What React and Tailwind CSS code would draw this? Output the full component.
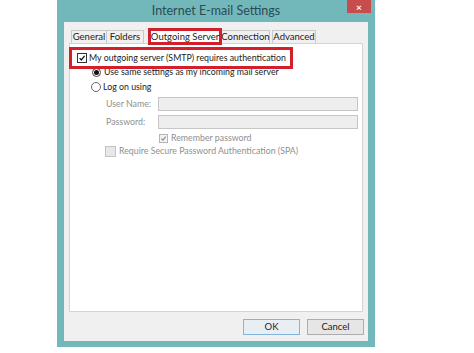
import React from "react";

const font = { fontFamily: 'Lato, "Noto Sans", sans-serif' };

function Check({ color = "#111" }) {
  return (
    <svg viewBox="0 0 10 10" className="w-full h-full">
      <path d="M2 5.2 L4.2 7.4 L8.2 2.4" fill="none" stroke={color} strokeWidth="1.6" />
    </svg>
  );
}

export default function App() {
  return (
    <div className="w-[474px] h-[353px] bg-white overflow-hidden whitespace-nowrap" style={font}>
      <div className="ml-[57px] w-[318px] h-[347px] bg-[#72b8bb] flex flex-col">
        {/* title bar */}
        <div className="relative h-[22px] flex items-center justify-center">
          <span className="text-[12.5px] text-[#2c4b52] leading-none">Internet E-mail Settings</span>
          <div className="absolute right-[4px] top-0 w-[24px] h-[13px] bg-[#c94c4c] flex items-center justify-center">
            <span className="text-white text-[10px] leading-none font-bold">×</span>
          </div>
        </div>
        {/* body */}
        <div className="mx-[7px] h-[319px] bg-[#f0f0f0] flex flex-col pl-[5px] pr-[5px]">
          {/* tabs */}
          <div className="flex items-end h-[21px] pl-[2px] text-[9.5px] text-[#222]">
            <div className="h-[13px] w-[36px] border border-b-0 border-[#c9c9c9] bg-[#f0f0f0] flex items-center justify-center leading-none">General</div>
            <div className="h-[13px] w-[37px] border border-b-0 border-l-0 border-[#c9c9c9] bg-[#f0f0f0] flex items-center justify-center leading-none">Folders</div>
            <div className="relative z-10 mb-[-2px] ml-[4px] h-[17px] w-[74px] border-[3px] border-[#d21f2b] bg-white flex items-start justify-center leading-none pt-[1px]">Outgoing Server</div>
            <div className="h-[13px] w-[48px] border border-b-0 border-l-0 border-[#c9c9c9] bg-[#f0f0f0] flex items-center justify-center leading-none">Connection</div>
            <div className="ml-[2px] h-[13px] w-[44px] border border-b-0 border-[#c9c9c9] bg-[#f0f0f0] flex items-center justify-center leading-none">Advanced</div>
          </div>
          {/* panel */}
          <div className="w-[294px] h-[269px] bg-white border border-[#d4d4d4] text-[8.8px] text-[#222] flex flex-col">
            <div className="relative z-10 mt-[3px] ml-[-1px] w-[224px] h-[22px] border-[3px] border-[#d21f2b] flex items-center pl-[5px] gap-[2px]">
              <div className="shrink-0 w-[10px] h-[10px] border border-[#333] bg-white">
                <Check />
              </div>
              <span className="leading-none">My outgoing server (SMTP) requires authentication</span>
            </div>
            <div className="mt-[-3px] h-[12px] flex items-center pl-[22px] gap-[3px]">
              <div className="shrink-0 w-[9px] h-[9px] rounded-full border border-[#444] bg-white flex items-center justify-center">
                <div className="w-[5px] h-[5px] rounded-full bg-[#111]" />
              </div>
              <span className="leading-none">Use same settings as my incoming mail server</span>
            </div>
            <div className="mt-[3px] h-[12px] flex items-center pl-[21px] gap-[2px]">
              <div className="shrink-0 w-[10px] h-[10px] rounded-full border border-[#666] bg-white" />
              <span className="leading-none">Log on using</span>
            </div>
            <div className="mt-[4px] h-[14px] flex items-center pl-[36px] text-[#8f8f8f]">
              <span className="w-[52px] leading-none">User Name:</span>
              <div className="shrink-0 w-[200px] h-[14px] border border-[#c6c6c6] bg-[#eeeeee]" />
            </div>
            <div className="mt-[4px] h-[14px] flex items-center pl-[36px] text-[#8f8f8f]">
              <span className="w-[52px] leading-none">Password:</span>
              <div className="shrink-0 w-[200px] h-[14px] border border-[#c6c6c6] bg-[#eeeeee]" />
            </div>
            <div className="mt-[4px] h-[10px] flex items-center pl-[89px] gap-[3px] text-[#8f8f8f]">
              <div className="shrink-0 w-[9px] h-[9px] border border-[#b5b5b5] bg-[#f2f2f2]">
                <Check color="#8a8a8a" />
              </div>
              <span className="leading-none">Remember password</span>
            </div>
            <div className="mt-[2px] h-[12px] flex items-center pl-[35px] gap-[3px] text-[#8f8f8f]">
              <div className="shrink-0 w-[11px] h-[11px] border border-[#c4c4c4] bg-[#e8e8e8]" />
              <span className="leading-none">Require Secure Password Authentication (SPA)</span>
            </div>
          </div>
          {/* buttons */}
          <div className="mt-[7px] mr-[-1px] flex justify-end gap-[7px] text-[9.5px] text-[#222]">
            <div className="w-[57px] h-[16px] border border-[#84b4e0] bg-[#e9eef3] flex items-center justify-center leading-none">OK</div>
            <div className="w-[57px] h-[16px] border border-[#adadad] bg-[#e6e6e6] flex items-center justify-center leading-none">Cancel</div>
          </div>
        </div>
      </div>
    </div>
  );
}
